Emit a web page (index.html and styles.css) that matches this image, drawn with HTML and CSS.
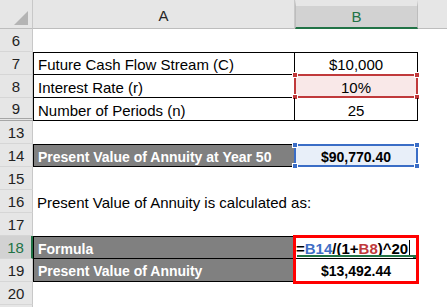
FILE: index.html
```html
<!DOCTYPE html>
<html>
<head>
<meta charset="utf-8">
<link rel="stylesheet" href="styles.css">
</head>
<body>
<div class="sheet">
  <div class="row hdr">
    <div class="corner"><span class="tri"></span></div>
    <div class="colhdr">A</div>
    <div class="colhdr sel">B</div>
    <div class="colhdr last"></div>
  </div>
  <div class="row">
    <div class="rn">6</div><div class="c"></div><div class="c"></div><div class="c"></div>
  </div>
  <div class="row">
    <div class="rn">7</div>
    <div class="c ta top">Future Cash Flow Stream (C)</div>
    <div class="c tb top ctr">$10,000</div>
    <div class="c"></div>
  </div>
  <div class="row">
    <div class="rn">8</div>
    <div class="c ta">Interest Rate (r)</div>
    <div class="c tb ctr pink"><span class="selbox red"><i class="h tl"></i><i class="h tr"></i><i class="h bl"></i><i class="h br"></i></span>10%</div>
    <div class="c"></div>
  </div>
  <div class="row">
    <div class="rn hidden">9</div>
    <div class="c ta">Number of Periods (n)</div>
    <div class="c tb ctr">25</div>
    <div class="c"></div>
  </div>
  <div class="row">
    <div class="rn">13</div><div class="c"></div><div class="c"></div><div class="c"></div>
  </div>
  <div class="row">
    <div class="rn">14</div>
    <div class="c ta top dark b">Present Value of Annuity at Year 50</div>
    <div class="c tb top ctr blue b"><span class="selbox bl-sel"><i class="h tl"></i><i class="h tr"></i><i class="h bl"></i><i class="h br"></i></span>$90,770.40</div>
    <div class="c"></div>
  </div>
  <div class="row">
    <div class="rn">15</div><div class="c"></div><div class="c"></div><div class="c"></div>
  </div>
  <div class="row">
    <div class="rn">16</div>
    <div class="c over">Present Value of Annuity is calculated as:</div>
    <div class="c"></div><div class="c"></div>
  </div>
  <div class="row">
    <div class="rn">17</div><div class="c"></div><div class="c"></div><div class="c"></div>
  </div>
  <div class="row">
    <div class="rn act">18</div>
    <div class="c ta top dark b">Formula</div>
    <div class="c tb top b edit"><span class="redbox"></span><span class="f">=<span class="fb">B14</span>/(1+<span class="fr">B8</span>)^20</span><span class="caret"></span><span class="uline"></span></div>
    <div class="c"></div>
  </div>
  <div class="row">
    <div class="rn">19</div>
    <div class="c ta dark b">Present Value of Annuity</div>
    <div class="c tb ctr b">$13,492.44</div>
    <div class="c"></div>
  </div>
  <div class="row">
    <div class="rn">20</div><div class="c"></div><div class="c"></div><div class="c"></div>
  </div>
  <div class="row">
    <div class="rn"></div><div class="c"></div><div class="c"></div><div class="c"></div>
  </div>
</div>
</body>
</html>
```
FILE: styles.css
```css
* { box-sizing: border-box; margin: 0; padding: 0; }
html, body { background: #fff; overflow: hidden; }
body {
  font-family: "Liberation Sans", Arial, sans-serif;
  font-size: 15px;
  color: #000;
}
.sheet { width: 447px; height: 307px; overflow: hidden; }
.row {
  display: grid;
  grid-template-columns: 33px 262px 123px 29px;
  height: 23px;
}
.row.hdr { height: 29px; }
.corner {
  background: #e6e6e6;
  border-right: 1px solid #c8c8c8;
  border-bottom: 1px solid #bdbdbd;
  position: relative;
}
.tri {
  position: absolute;
  right: 4px;
  bottom: 3px;
  width: 0; height: 0;
  border-left: 14px solid transparent;
  border-bottom: 14px solid #b4b4b4;
}
.colhdr {
  background: #e6e6e6;
  border-right: 1px solid #c8c8c8;
  border-bottom: 1px solid #bdbdbd;
  display: flex;
  align-items: center;
  justify-content: center;
  font-size: 15px;
  color: #262626;
  padding-top: 2px;
}
.colhdr.last { border-right: none; }
.colhdr.sel {
  background: #d2d2d2;
  color: #217346;
  border-top: 6px solid #e6e6e6;
  border-left: 1px solid #bdbdbd;
  border-right: 1px solid #bdbdbd;
  border-bottom: 2px solid #217346;
  padding-top: 0;
}
.rn {
  background: #e6e6e6;
  border-right: 1px solid #c8c8c8;
  border-bottom: 1px solid #d6d6d6;
  display: flex;
  align-items: center;
  justify-content: center;
  font-size: 15px;
  color: #222;
  padding-top: 1px;
}
.rn.hidden { border-bottom: 3px double #a6a6a6; }
.rn.act {
  background: #d2d2d2;
  color: #217346;
  border-right: 2px solid #217346;
}
.c {
  display: flex;
  align-items: center;
  padding: 2px 4px 0 4px;
  white-space: nowrap;
  position: relative;
}
.c.over { overflow: visible; z-index: 2; }
.ctr { justify-content: center; }
.b { font-weight: bold; font-size: 14px; }
.ta {
  border-left: 1px solid #000;
  border-right: 1px solid #000;
  border-bottom: 1px solid #000;
}
.tb {
  border-right: 1px solid #000;
  border-bottom: 1px solid #000;
}
.top { border-top: 1px solid #000; }
.dark { background: #808080; color: #fff; }
.pink { background: #f9e8e8; }
.blue { background: #e8eff9; }
.selbox {
  position: absolute;
  left: -1px; top: -1px; right: -1px; bottom: -1px;
  border: 2px solid #c0393b;
  pointer-events: none;
}
.selbox.bl-sel { border-color: #3a6dc6; }
.h {
  position: absolute;
  width: 6px; height: 6px;
  background: #c0393b;
  border: 1px solid #fff;
}
.bl-sel .h { background: #3a6dc6; }
.h.tl { left: -4px; top: -4px; }
.h.tr { right: -4px; top: -4px; }
.h.bl { left: -4px; bottom: -4px; }
.h.br { right: -4px; bottom: -4px; }
.edit { padding-left: 1px; }
.f { font-size: 15px; }
.fb { color: #3f6fc6; }
.fr { color: #c0393b; }
.caret {
  display: inline-block;
  width: 1px; height: 17px;
  background: #000;
  margin-left: 1px;
}
.uline {
  position: absolute;
  left: 2px; right: 4px; bottom: 1px;
  height: 2px;
  background: #217346;
}
.uline::after {
  content: "";
  position: absolute;
  right: -3px; top: 0;
  width: 3px; height: 3px;
  background: #217346;
}
.redbox {
  position: absolute;
  left: -2px; top: -2px;
  width: 126px; height: 49px;
  border: 3px solid #ff0000;
  z-index: 3;
  pointer-events: none;
}
```
